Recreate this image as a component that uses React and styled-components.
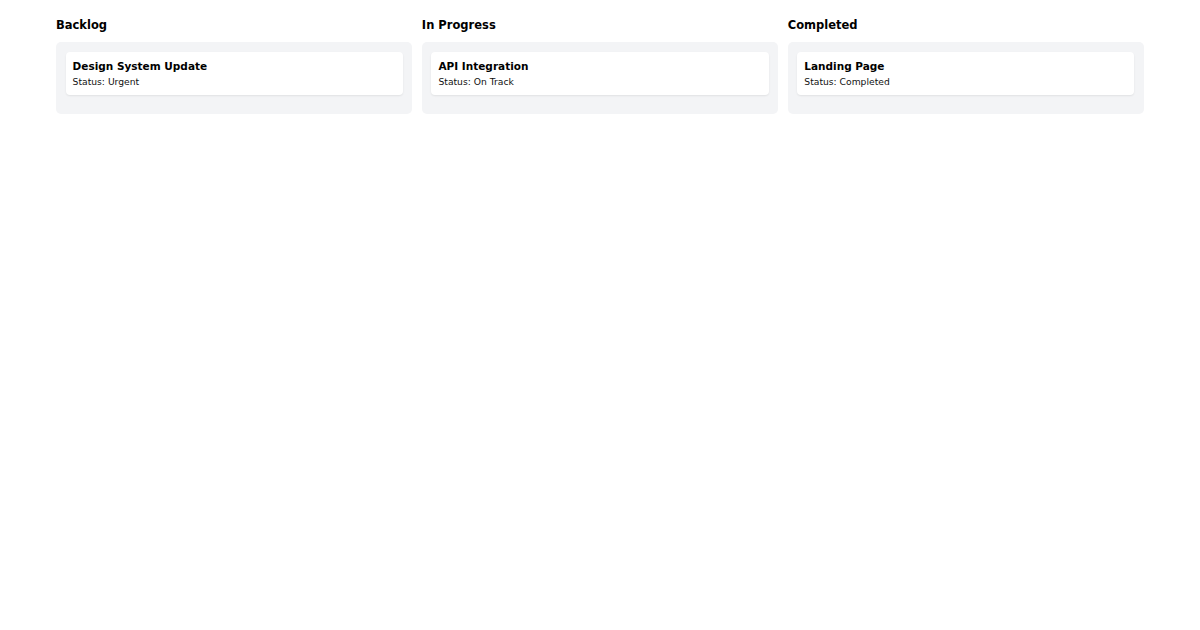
import React from 'react';
import styled, { createGlobalStyle } from 'styled-components';

const GlobalStyle = createGlobalStyle`
  body {
    margin: 0;
    background: #ffffff;
    font-family: "DejaVu Sans", sans-serif;
    color: #000000;
  }
`;

const Board = styled.div`
  display: grid;
  grid-template-columns: repeat(3, 1fr);
  gap: 9.6px;
  padding: 17.8px 56px 0;
  align-items: start;
`;

const Column = styled.section`
  display: flex;
  flex-direction: column;
`;

const ColumnTitle = styled.h2`
  margin: 0 0 10.6px;
  font-size: 11.5px;
  font-weight: bold;
  line-height: normal;
  color: #000;
`;

const Lane = styled.div`
  background-color: #f3f4f6;
  border-radius: 5px;
  padding: 9.6px 9.6px 18.4px;
  display: flex;
  flex-direction: column;
  gap: 8px;
`;

const Card = styled.div`
  background-color: #ffffff;
  border-radius: 4px;
  padding: 8px 7px 8.3px;
  box-shadow: 0 1px 2px rgba(0, 0, 0, 0.08);
`;

const CardTitle = styled.div`
  font-size: 10.5px;
  font-weight: bold;
  line-height: normal;
  margin-bottom: 4px;
`;

const CardStatus = styled.div`
  font-size: 9.2px;
  line-height: normal;
  color: #111;
`;

const columns = [
  { name: 'Backlog', cards: [{ title: 'Design System Update', status: 'Urgent' }] },
  { name: 'In Progress', cards: [{ title: 'API Integration', status: 'On Track' }] },
  { name: 'Completed', cards: [{ title: 'Landing Page', status: 'Completed' }] },
];

export default function App() {
  return (
    <>
      <GlobalStyle />
      <Board>
        {columns.map((col) => (
          <Column key={col.name}>
            <ColumnTitle>{col.name}</ColumnTitle>
            <Lane>
              {col.cards.map((card) => (
                <Card key={card.title}>
                  <CardTitle>{card.title}</CardTitle>
                  <CardStatus>Status: {card.status}</CardStatus>
                </Card>
              ))}
            </Lane>
          </Column>
        ))}
      </Board>
    </>
  );
}
